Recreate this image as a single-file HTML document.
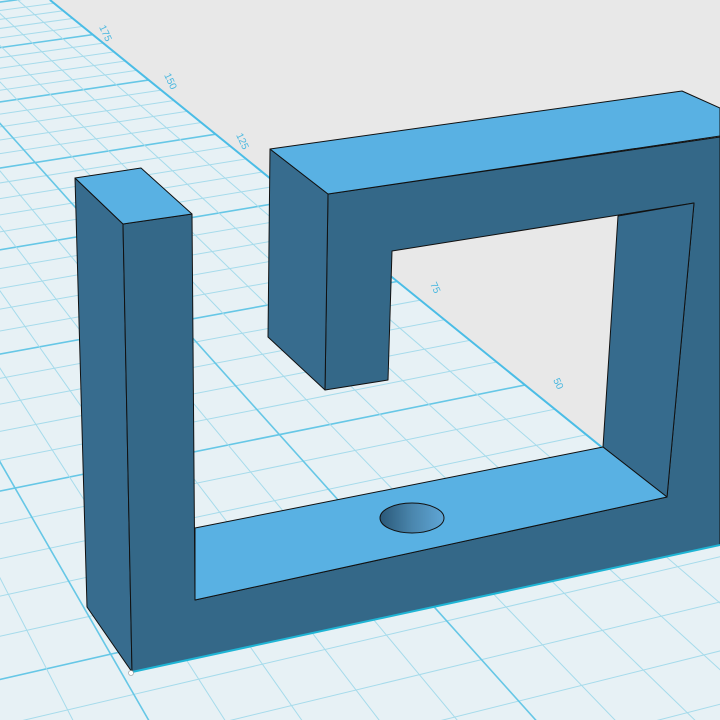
<!DOCTYPE html>
<html><head><meta charset="utf-8"><style>
html,body{margin:0;padding:0;background:#e8e8e8;overflow:hidden;width:720px;height:720px}
svg{display:block}
</style></head><body>
<svg id="s" width="720" height="720" viewBox="0 0 720 720" xmlns="http://www.w3.org/2000/svg">
<defs>
<clipPath id="gc"><polygon points="0,0 50,0 720,543 720,720 0,720"/></clipPath>
<linearGradient id="hg" x1="0" x2="1" y1="0" y2="0">
<stop offset="0" stop-color="#2a5878"/><stop offset="0.5" stop-color="#4a86ad"/><stop offset="1" stop-color="#5fa6d6"/>
</linearGradient>
</defs>
<rect width="720" height="720" fill="#e8e8e8"/>
<g clip-path="url(#gc)">
<rect width="720" height="720" fill="#e7f1f5"/>
<g id="grid"></g>
</g>
<line x1="50" y1="0" x2="720" y2="543" stroke="#4bbde6" stroke-width="2"/>
<g font-family="Liberation Sans, sans-serif" font-size="10" fill="#4ab8e0">
<text transform="translate(99,27) rotate(65)">175</text>
<text transform="translate(164,75) rotate(65)">150</text>
<text transform="translate(236,135) rotate(65)">125</text>
<text transform="translate(430,284) rotate(65)">75</text>
<text transform="translate(553,380) rotate(65)">50</text>
</g>
<g stroke="#111" stroke-width="1" stroke-linejoin="round">
<polygon points="75,178 123,224 132,672 87,607" fill="#376c8e"/>
<polygon points="123,224 192,214 195,600 667,497 694,203 392,251 388,380 325,390 328,194 720,137 720,545 132,672" fill="#346888"/>
<polygon points="618,216 694,203 667,497 603,447" fill="#366b8d"/>
<polygon points="195,528 603,447 667,497 195,600" fill="#59b1e3"/>
<polygon points="270,149 328,194 325,390 268,337" fill="#376c8e"/>
<polygon points="270,149 682,91 720,108 720,136 328,194" fill="#59b1e3"/>
<polygon points="75,178 141,168 192,214 123,224" fill="#59b1e3"/>
<ellipse cx="412" cy="518" rx="32" ry="15" fill="url(#hg)"/>
</g>
<line x1="132" y1="672" x2="720" y2="545" stroke="#1fb5d5" stroke-width="2"/>
<circle cx="131" cy="673" r="2.5" fill="#fff" stroke="#999" stroke-width="0.6"/>
</svg>
<script>
(function(){
var W=[[0,150],[22.5,150],[50,50],[0,50]];
var I=[[149,80],[0,102],[15,488],[525,385]];
var A=[],B=[];
for(var i=0;i<4;i++){var u=W[i][0],v=W[i][1],x=I[i][0],y=I[i][1];
 A.push([u,v,1,0,0,0,-u*x,-v*x]);B.push(x);
 A.push([0,0,0,u,v,1,-u*y,-v*y]);B.push(y);}
var n=8;
for(var c=0;c<n;c++){var p=c;for(var r=c+1;r<n;r++)if(Math.abs(A[r][c])>Math.abs(A[p][c]))p=r;
 var t=A[c];A[c]=A[p];A[p]=t;t=B[c];B[c]=B[p];B[p]=t;
 for(var r=0;r<n;r++){if(r==c)continue;var f=A[r][c]/A[c][c];
  for(var k=c;k<n;k++)A[r][k]-=f*A[c][k];B[r]-=f*B[c];}}
var H=[];for(var i=0;i<n;i++)H.push(B[i]/A[i][i]);
function P(u,v){var w=H[6]*u+H[7]*v+1;return [(H[0]*u+H[1]*v+H[2])/w,(H[3]*u+H[4]*v+H[5])/w,w];}
function ok(p){return p[2]>0.03&&p[0]>-400&&p[0]<1200&&p[1]>-300&&p[1]<1100;}
var out="";
function draw(f,a0,a1,maj){var first=null,last=null;
 for(var a=a0;a<=a1;a+=1){var p=f(a);if(ok(p)){if(!first)first=p;last=p;}}
 if(!first||first===last)return;
 out+='<line x1="'+first[0].toFixed(1)+'" y1="'+first[1].toFixed(1)+'" x2="'+last[0].toFixed(1)+'" y2="'+last[1].toFixed(1)+'" stroke="'+(maj?'#66c7e6':'#a6dbeb')+'" stroke-width="'+(maj?1.6:1)+'"/>';}
for(var v=-150;v<=300;v+=5){(function(v){draw(function(u){return P(u,v)},-50,400,v%25==0);})(v);}
for(var u=0;u<=400;u+=5){(function(u){draw(function(v){return P(u,v)},-150,300,u%25==0);})(u);}
document.getElementById("grid").innerHTML=out;
})();
</script>
</body></html>
